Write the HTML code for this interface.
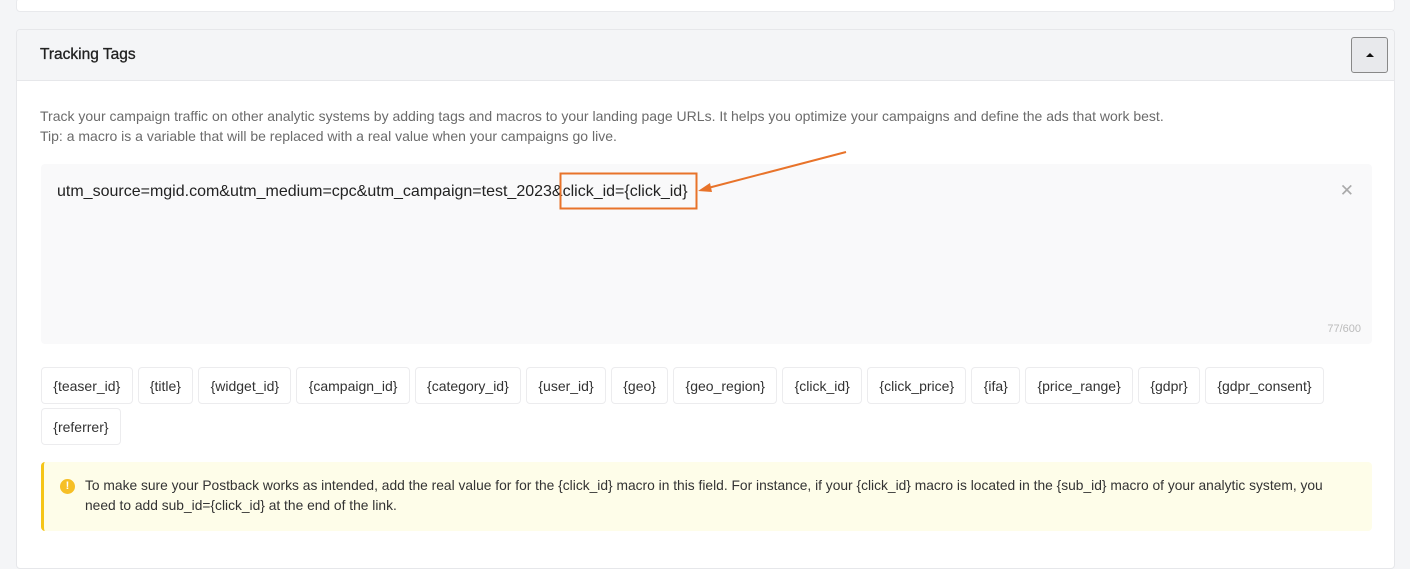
<!DOCTYPE html>
<html><head><meta charset="utf-8"><style>
*{box-sizing:border-box;margin:0;padding:0}
body{width:1410px;height:550px;background:#f4f5f7;font-family:"Liberation Sans",sans-serif;position:relative;overflow:hidden;color:#222}
.top{position:absolute;left:16px;top:-2px;width:1379px;height:14px;background:#fff;border:1px solid #e8e9ec;border-radius:4px}
.card{position:absolute;left:16px;top:29px;width:1379px;height:540px;background:#fff;border:1px solid #e6e7ea;border-radius:4px;overflow:hidden}
.hdr{height:51px;background:#f4f5f7;border-bottom:1px solid #e6e7ea;position:relative}
.hdr h2{position:absolute;left:23px;top:16px;font-size:15.5px;font-weight:normal;color:#222;-webkit-text-stroke:.3px #222}
.btn{position:absolute;left:1334px;top:7px;width:37px;height:36px;border:1px solid #888;border-radius:3px;background:#e8e9ec}
.btn:after{content:"";position:absolute;left:14px;top:15px;border-left:4px solid transparent;border-right:4px solid transparent;border-bottom:4px solid #111}
.desc{position:absolute;left:23px;top:76px;font-size:14px;line-height:20px;color:#6b6b6b}
.ta{position:absolute;left:24px;top:134px;width:1331px;height:180px;background:#f9f9fa;border-radius:4px}
.ta .v{position:absolute;left:16px;top:19px;font-size:16px;color:#222}
.ta .x{position:absolute;right:18px;top:17px;font-size:17px;color:#aaa}
.ta .c{position:absolute;right:11px;bottom:9px;font-size:11px;color:#bbb}
.tags{position:absolute;left:24px;top:337px;width:1320px}
.tag{float:left;height:37px;margin:0 5px 4px 0;padding:0 11.3px;border:1px solid #ececee;border-radius:4px;font-size:14px;line-height:36px;color:#333;background:#fff}
.alert{position:absolute;left:24px;top:432px;width:1331px;height:69px;background:#fefde9;border-left:3px solid #f5c518;border-radius:4px;font-size:13.8px;line-height:20px;color:#333;padding:14px 20px 0 41px}
.alert i{position:absolute;left:16px;top:17px;width:15px;height:15px;border-radius:50%;background:#f6bf26;color:#fff;font-style:normal;font-size:11px;font-weight:bold;text-align:center;line-height:15px}
</style></head><body>
<div class="top"></div>
<div class="card">
<div class="hdr"><h2>Tracking Tags</h2><div class="btn"></div></div>
<div class="desc">Track your campaign traffic on other analytic systems by adding tags and macros to your landing page URLs. It helps you optimize your campaigns and define the ads that work best.<br>Tip: a macro is a variable that will be replaced with a real value when your campaigns go live.</div>
<div class="ta"><div class="v">utm_source=mgid.com&amp;utm_medium=cpc&amp;utm_campaign=test_2023&amp;click_id={click_id}</div><div class="x">✕</div><div class="c">77/600</div></div>
<div class="tags">
<div class="tag">{teaser_id}</div><div class="tag">{title}</div><div class="tag">{widget_id}</div><div class="tag">{campaign_id}</div><div class="tag">{category_id}</div><div class="tag">{user_id}</div><div class="tag">{geo}</div><div class="tag">{geo_region}</div><div class="tag">{click_id}</div><div class="tag">{click_price}</div><div class="tag">{ifa}</div><div class="tag">{price_range}</div><div class="tag">{gdpr}</div><div class="tag">{gdpr_consent}</div><div class="tag">{referrer}</div>
</div>
<div class="alert"><i>!</i>To make sure your Postback works as intended, add the real value for for the {click_id} macro in this field. For instance, if your {click_id} macro is located in the {sub_id} macro of your analytic system, you need to add sub_id={click_id} at the end of the link.</div>
</div>
<svg style="position:absolute;left:0;top:0" width="1410" height="550">
<rect x="560.5" y="173.5" width="136" height="35" fill="none" stroke="#e8732a" stroke-width="2"/>
<line x1="846" y1="152" x2="708" y2="188" stroke="#e8732a" stroke-width="2"/>
<polygon points="698,191 710,183 712,192" fill="#e8732a"/>
</svg>
</body></html>
